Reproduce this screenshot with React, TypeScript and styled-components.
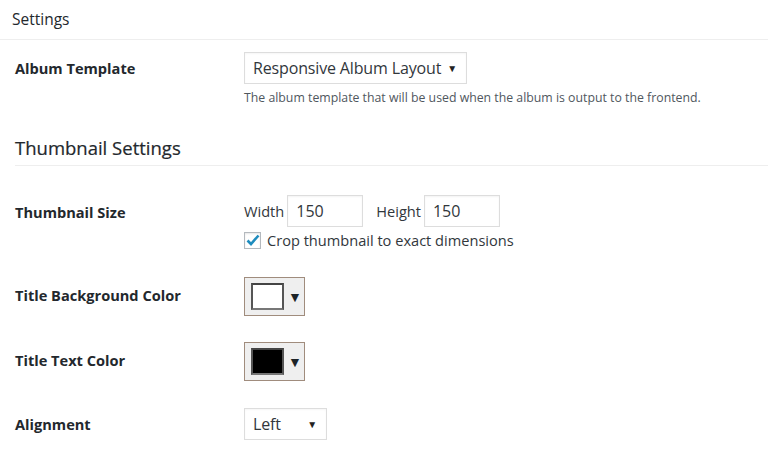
import React from "react";
import styled, { createGlobalStyle } from "styled-components";

const Global = createGlobalStyle`
  html, body { margin: 0; padding: 0; background: #fff; }
  body { font-family: "Open Sans", "Noto Sans", sans-serif; color: #23282d; }
`;

const Page = styled.div`
  width: 768px;
  height: 464px;
  overflow: hidden;
  background: #fff;
`;

const PanelHeader = styled.div`
  height: 40px;
  box-sizing: border-box;
  border-bottom: 1px solid #eeeeee;
  padding: 0 12px 2px;
  display: flex;
  align-items: center;
  font-size: 15.5px;
  color: #23282d;
`;

const Body = styled.div`
  padding: 0 0 0 15px;
`;

const Row = styled.div<{ $h: number; $top?: number }>`
  display: grid;
  grid-template-columns: 229px 1fr;
  height: ${(p) => p.$h}px;
  padding-top: ${(p) => p.$top ?? 0}px;
  box-sizing: border-box;
`;

const Label = styled.div<{ $pt: number }>`
  font-weight: 700;
  font-size: 14.6px;
  color: #23282d;
  padding-top: ${(p) => p.$pt}px;
`;

const Field = styled.div`
  display: flex;
  flex-direction: column;
  align-items: flex-start;
`;

const SelectBox = styled.div<{ $w: number }>`
  width: ${(p) => p.$w}px;
  height: 32px;
  box-sizing: border-box;
  border: 1px solid #dddddd;
  box-shadow: inset 0 1px 2px rgba(0, 0, 0, 0.04);
  display: flex;
  align-items: center;
  justify-content: space-between;
  padding: 0 9px 0 8px;
  font-size: 16px;
  color: #32373c;
  background: #fff;
  letter-spacing: -0.15px;
`;

const Caret = styled.span`
  font-size: 10px;
  color: #222;
`;

const Desc = styled.div`
  margin-top: 5px;
  font-size: 12.3px;
  color: #50575e;
`;

const SectionTitle = styled.div`
  height: 51px;
  box-sizing: border-box;
  border-bottom: 1px solid #eeeeee;
  display: flex;
  align-items: center;
  padding-top: 14px;
  font-size: 18.5px;
  color: #23282d;
  -webkit-text-stroke: 0.2px #23282d;
`;

const Inline = styled.div`
  display: flex;
  align-items: center;
  font-size: 14.6px;
  color: #32373c;
`;

const NumInput = styled.div`
  width: 76px;
  height: 32px;
  box-sizing: border-box;
  border: 1px solid #dddddd;
  box-shadow: inset 0 1px 2px rgba(0, 0, 0, 0.05);
  display: flex;
  align-items: center;
  padding-left: 8px;
  margin-left: 3px;
  margin-right: 13px;
  font-size: 16px;
  color: #32373c;
`;

const CheckRow = styled.label`
  display: flex;
  align-items: center;
  margin-top: 3px;
  font-size: 14.6px;
  color: #32373c;
`;

const CheckBox = styled.span`
  width: 17px;
  height: 17px;
  box-sizing: border-box;
  border: 1px solid #b4b9be;
  box-shadow: inset 0 1px 2px rgba(0, 0, 0, 0.1);
  display: inline-flex;
  align-items: center;
  justify-content: center;
  margin-right: 6px;
  background: #fff;
`;

const ColorButton = styled.div`
  width: 61px;
  height: 39px;
  box-sizing: border-box;
  border: 1px solid #a08c7d;
  background: #efefef;
  display: flex;
  align-items: center;
  padding-left: 6px;
  gap: 4px;
`;

const Swatch = styled.span<{ $c: string }>`
  width: 33px;
  height: 27px;
  box-sizing: border-box;
  background: ${(p) => p.$c};
  border: 2px solid #555;
  border-top-color: #444;
  border-bottom-color: #777;
`;

const ColorCaret = styled.span`
  font-size: 14px;
  color: #1d2327;
  line-height: 1;
`;

export default function App() {
  return (
    <Page>
      <Global />
      <PanelHeader>Settings</PanelHeader>
      <Body>
        <Row $h={75} $top={12}>
          <Label $pt={6}>Album Template</Label>
          <Field>
            <SelectBox $w={223}>
              <span>Responsive Album Layout</span>
              <Caret>▼</Caret>
            </SelectBox>
            <Desc>The album template that will be used when the album is output to the frontend.</Desc>
          </Field>
        </Row>
        <SectionTitle>Thumbnail Settings</SectionTitle>
        <Row $h={111} $top={29}>
          <Label $pt={7}>Thumbnail Size</Label>
          <Field>
            <Inline>
              Width
              <NumInput>150</NumInput>
              Height
              <NumInput>150</NumInput>
            </Inline>
            <CheckRow>
              <CheckBox>
                <svg width="14" height="12" viewBox="0 0 14 12">
                  <path d="M1.5 6.5 L5 10 L12.5 1.5" fill="none" stroke="#1e8cbe" strokeWidth="2.6" />
                </svg>
              </CheckBox>
              Crop thumbnail to exact dimensions
            </CheckRow>
          </Field>
        </Row>
        <Row $h={65} $top={0}>
          <Label $pt={8}>Title Background Color</Label>
          <Field>
            <ColorButton>
              <Swatch $c="#ffffff" />
              <ColorCaret>▼</ColorCaret>
            </ColorButton>
          </Field>
        </Row>
        <Row $h={66} $top={0}>
          <Label $pt={8}>Title Text Color</Label>
          <Field>
            <ColorButton>
              <Swatch $c="#000000" />
              <ColorCaret>▼</ColorCaret>
            </ColorButton>
          </Field>
        </Row>
        <Row $h={50} $top={0}>
          <Label $pt={6}>Alignment</Label>
          <Field>
            <SelectBox $w={83}>
              <span>Left</span>
              <Caret>▼</Caret>
            </SelectBox>
          </Field>
        </Row>
      </Body>
    </Page>
  );
}
